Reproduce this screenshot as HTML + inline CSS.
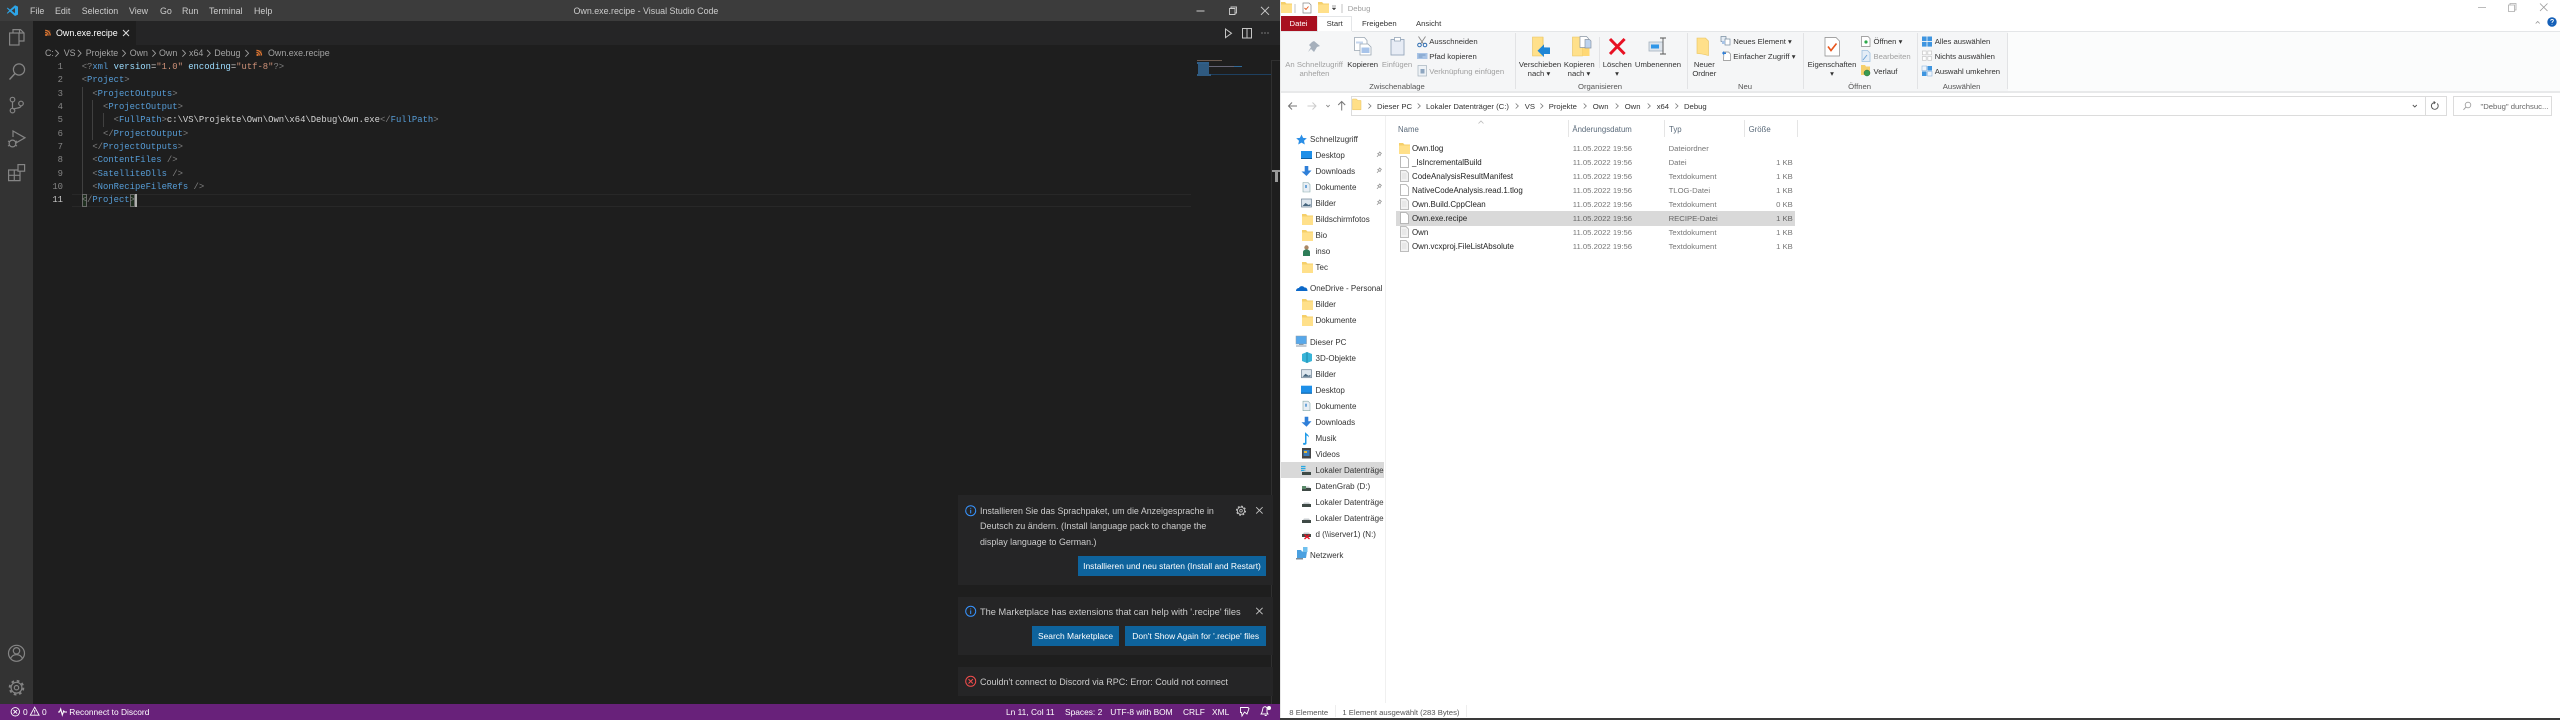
<!DOCTYPE html>
<html lang="de"><head><meta charset="utf-8"><title>Own.exe.recipe - Visual Studio Code</title>
<style>
html,body{margin:0;padding:0;width:2560px;height:720px;overflow:hidden;background:#fff}
#r{position:absolute;left:0;top:0;width:2560px;height:720px;overflow:hidden;font-family:"Liberation Sans",sans-serif;filter:blur(.3px)}
.b{position:absolute}
.t{position:absolute;white-space:nowrap;line-height:14px;margin-top:-7px}
.c{transform:translateX(-50%)}
.m{font-size:8.9px;color:#ccc}
.w{font-size:8.9px;color:#fff}
.wb{font-size:8.45px;color:#fff}
.bc{font-size:8.9px;color:#a3a3a3}
.sb{font-size:8.4px;color:#fff}
.n{font-size:8.9px;color:#ccc}
.e,.g,.l,.a,.h,.f,.d,.nv{margin-top:-6px}
.e{font-size:7.7px;color:#333}
.g{font-size:7.7px;color:#a0a0a0}
.l{font-size:7.7px;color:#555}
.a{font-size:7.7px;color:#333}
.h{font-size:7.8px;color:#5a6a7a}
.f{font-size:7.95px;color:#222}
.d{font-size:7.7px;color:#777}
.nv{font-size:8px;color:#333}
pre{position:absolute;margin:0;left:81.7px;font:8.89px/13.33px "Liberation Mono",monospace;color:#d4d4d4;white-space:pre;transform:translateY(1px)}
.ln{position:absolute;width:30px;left:33px;text-align:right;font:8.89px/13.33px "Liberation Mono",monospace;color:#858585;transform:translateY(1px)}
i{font-style:normal}
.p{color:#808080}.k{color:#569cd6}.q{color:#9cdcfe}.s{color:#ce9178}
.btn{position:absolute;background:#0e639c}
.card{position:absolute;background:#252526;left:958px;width:315px}
</style></head><body><div id="r">

<!-- VS Code backgrounds -->
<div class="b" style="left:0;top:0;width:1280px;height:720px;background:#1e1e1e"></div>
<div class="b" style="left:0;top:0;width:1280px;height:20.7px;background:#3c3c3c"></div>
<div class="b" style="left:0;top:20.7px;width:33px;height:684px;background:#333"></div>
<div class="b" style="left:33px;top:20.7px;width:1247px;height:24.3px;background:#252526"></div>
<div class="b" style="left:33px;top:20.7px;width:102.5px;height:24.3px;background:#1e1e1e"></div>
<div class="b" style="left:72px;top:194px;width:1119px;height:12.5px;border-top:1px solid #282828;border-bottom:1px solid #282828;box-sizing:border-box"></div>
<div class="b" style="left:81.5px;top:87px;width:1px;height:107px;background:#404040"></div>
<div class="b" style="left:92.3px;top:100px;width:1px;height:40px;background:#404040"></div>
<div class="b" style="left:103px;top:113px;width:1px;height:14px;background:#404040"></div>
<div class="b" style="left:81.5px;top:194px;width:5.5px;height:13px;border:1px solid #6b6b6b;box-sizing:border-box;background:#1f2f1f"></div>
<div class="b" style="left:129.5px;top:194px;width:5.5px;height:13px;border:1px solid #6b6b6b;box-sizing:border-box;background:#1f2f1f"></div>
<div class="b" style="left:135px;top:194px;width:1.5px;height:13px;background:#aeafad"></div>
<div class="b" style="left:1271px;top:60px;width:1px;height:644px;background:#303030"></div>
<div class="b" style="left:1271px;top:60px;width:9px;height:1px;background:#303030"></div>
<div class="b" style="left:1275px;top:170px;width:3px;height:12px;background:#999"></div>
<div class="b" style="left:1272px;top:170px;width:8px;height:1.5px;background:#999"></div>
<!-- minimap -->
<div class="b" style="left:1197px;top:60px;width:25px;height:1px;background:#6a5a50"></div>
<div class="b" style="left:1197px;top:62px;width:12px;height:2px;background:#2f5f8a"></div>
<div class="b" style="left:1198px;top:64px;width:11px;height:10px;background:#2f5a80"></div>
<div class="b" style="left:1209px;top:66px;width:25px;height:1px;background:#667"></div>
<div class="b" style="left:1234px;top:66px;width:8px;height:1px;background:#2f6a9a"></div>
<div class="b" style="left:1197px;top:74px;width:14px;height:1.5px;background:#2f5a80"></div>
<div class="b" style="left:1211px;top:74.3px;width:60px;height:1px;background:#1e4060"></div>

<!-- Status bar -->
<div class="b" style="left:0;top:704px;width:1280px;height:16px;background:#68217a"></div>

<!-- Notifications -->
<div class="card" style="top:495px;height:90px"></div>
<div class="card" style="top:597px;height:58px"></div>
<div class="card" style="top:667px;height:29px"></div>
<div class="btn" style="left:1078px;top:556px;width:188px;height:20px"></div>
<div class="btn" style="left:1032px;top:626px;width:87px;height:19.5px"></div>
<div class="btn" style="left:1125.3px;top:626px;width:140.7px;height:19.5px"></div>

<!-- Explorer backgrounds -->
<div class="b" style="left:1280px;top:0;width:1280px;height:718px;background:#fff"></div>
<div class="b" style="left:1280px;top:718px;width:1280px;height:2px;background:#3a3a3a"></div>
<div class="b" style="left:1280px;top:15.7px;width:37px;height:15px;background:#a80f1f"></div>
<div class="b" style="left:1280px;top:31px;width:1280px;height:60px;background:#f5f6f7"></div>
<div class="b" style="left:2008px;top:31px;width:552px;height:60px;background:#fbfcfc"></div>
<div class="b" style="left:1280px;top:30.7px;width:1280px;height:1px;background:#e4e6e8"></div>
<div class="b" style="left:1280px;top:91px;width:1280px;height:2px;background:#e8e9ea"></div>
<div class="b" style="left:1317px;top:15.7px;width:35px;height:16px;background:#fff;border:1px solid #e4e6e8;border-bottom:0;box-sizing:border-box"></div>
<div class="b" style="left:1317.5px;top:31px;width:34px;height:1.5px;background:#f5f6f7"></div>
<div class="b" style="left:1515px;top:33px;width:1px;height:56px;background:#e2e3e5"></div>
<div class="b" style="left:1687px;top:33px;width:1px;height:56px;background:#e2e3e5"></div>
<div class="b" style="left:1803px;top:33px;width:1px;height:56px;background:#e2e3e5"></div>
<div class="b" style="left:1917px;top:33px;width:1px;height:56px;background:#e2e3e5"></div>
<div class="b" style="left:2007px;top:33px;width:1px;height:56px;background:#e2e3e5"></div>
<div class="b" style="left:1599px;top:37px;width:1px;height:31px;background:#e2e3e5"></div>
<!-- address -->
<div class="b" style="left:1350.7px;top:96.3px;width:1096px;height:19.4px;border:1px solid #dcdcdc;box-sizing:border-box;background:#fff"></div>
<div class="b" style="left:2425px;top:96.3px;width:1px;height:19.4px;background:#dcdcdc"></div>
<div class="b" style="left:2453px;top:96.3px;width:99px;height:19.4px;border:1px solid #dcdcdc;box-sizing:border-box;background:#fff"></div>
<!-- separators -->
<div class="b" style="left:1385px;top:116px;width:1px;height:587px;background:#f0f0f0"></div>
<div class="b" style="left:1280px;top:462px;width:104px;height:16px;background:#d9d9d9"></div>
<div class="b" style="left:1567.5px;top:120px;width:1px;height:17px;background:#e5e5e5"></div>
<div class="b" style="left:1663.8px;top:120px;width:1px;height:17px;background:#e5e5e5"></div>
<div class="b" style="left:1744px;top:120px;width:1px;height:17px;background:#e5e5e5"></div>
<div class="b" style="left:1797px;top:120px;width:1px;height:17px;background:#e5e5e5"></div>
<div class="b" style="left:1396.2px;top:211.3px;width:399.3px;height:14.7px;background:#d9d9d9"></div>
<div class="b" style="left:1335px;top:705px;width:1px;height:12px;background:#eee"></div>
<div class="b" style="left:1465.5px;top:705px;width:1px;height:12px;background:#eee"></div>
<div class="b" style="left:1280px;top:0;width:1px;height:718px;background:#e8e8e8"></div>

<!-- ICONS -->
<svg class="b" style="left:0;top:0" width="2560" height="720" viewBox="0 0 2560 720">
<defs>
<g id="fo"><path d="M0 2h4l1.500 1.500H11V13H0z" fill="#f5cf6a"/><path d="M0 4.500h11V13H0z" fill="#ffe08a"/></g>
<g id="doc"><path d="M.5.5h5.500l2.500 2.500v8.500h-8z" fill="#fff" stroke="#a8a8a8" stroke-width=".8"/></g>
<g id="txt"><path d="M.5.5h5.500l2.500 2.500v8.500h-8z" fill="#f2f2f2" stroke="#ababab" stroke-width=".8"/><path d="M2 4h4.500M2 6h4.500M2 8h4.500" stroke="#ccc" stroke-width=".6"/></g>
<g id="pin"><path d="M-1.500 -3h3M-1 -3v2.500h2v-2.500M0 -.5v3M-2 -.5h4" fill="none" stroke="#999" stroke-width=".8" transform="rotate(40)"/></g>
<g id="drv"><rect x="-4.500" y="0" width="9" height="3" fill="#3f4a46"/><path d="M-3.500 0l1-1.500h5l1 1.500z" fill="#c9ced1"/></g>
<g id="img"><rect x="-5" y="-4" width="10" height="8" fill="#dde6ee" stroke="#6b7f92" stroke-width=".7"/><path d="M-4 3l3-3 3 2 2-1v2z" fill="#46667f"/></g>
<g id="dsk"><rect x="-5.500" y="-4" width="11" height="8" fill="#1e8fe8"/><rect x="-5.500" y="3" width="11" height="1" fill="#0c5fa3"/></g>
<g id="dlw"><path d="M-1.800 -5h3.600v4.500h3.200L0 5l-5-4.500h3.200z" fill="#2f7fd8"/></g>
<g id="dcm"><path d="M-3.500 -4.500h5l2 2v7.500h-7z" fill="#e8eef4" stroke="#8aa" stroke-width=".6"/><path d="M-1.500 -2h2v3h-2z" fill="#6ea6d8"/></g>
<g id="ch"><path d="M-1.300 -2.500L1.300 0L-1.300 2.500" fill="none" stroke="#777" stroke-width=".8"/></g>
<g id="vc"><path d="M-1.600 -3.400L1.600 0L-1.600 3.400" fill="none" stroke="#a0a0a0" stroke-width=".85"/></g>
<g id="rss"><rect x="-2.600" y="-3" width="5.400" height="6" fill="#e37933" opacity=".25"/><circle cx="-1.600" cy="2" r="1" fill="#e37933"/><path d="M-2.600 -.6a3 3 0 013 3M-2.600 -2.800a5.200 5.200 0 015.200 5.200" fill="none" stroke="#e37933" stroke-width="1"/></g>
<g id="inf"><circle r="5" fill="none" stroke="#3794ff" stroke-width="1"/><path d="M0 -2.800v.9M0 -.9v3.600" stroke="#3794ff" stroke-width="1"/></g>
<g id="x"><path d="M-3.200 -3.200L3.200 3.200M3.200 -3.200L-3.200 3.200" stroke="#c5c5c5" stroke-width=".9"/></g>
</defs>

<!-- vscode logo -->
<path d="M15 5.200L18 6.600V14.600L15 16 10 11.600 7.600 13.600 6.800 13.100 9.200 10.600 6.800 8.100 7.600 7.600 10 9.600z" fill="#2da5e8"/>
<path d="M15 8L11.600 10.600 15 13.200z" fill="#3c3c3c"/>
<!-- win controls -->
<path d="M1196.500 11h8" stroke="#ccc" stroke-width="1"/>
<path d="M1229.500 8.500h5.500v6h-5.500zM1231 8.500v-1.500h5.500v6h-1.500" fill="none" stroke="#ccc" stroke-width=".9"/>
<path d="M1261 6.800l8 8M1269 6.800l-8 8" stroke="#ccc" stroke-width="1"/>
<!-- activity -->
<g fill="none" stroke="#858585" stroke-width="1.200">
<path d="M13 33V29.600h7.500L24 33v8h-5M19.500 29.600v3.400H24"/><rect x="9.600" y="33" width="9.400" height="12"/>
<circle cx="19" cy="69.500" r="5.600"/><path d="M15 73.500L9.500 79.500" stroke-width="1.400"/>
<circle cx="12.500" cy="99.600" r="2.300"/><circle cx="12.500" cy="110.600" r="2.300"/><circle cx="21" cy="103.500" r="2.300"/><path d="M12.500 102v6.200M21 105.800c0 3-6.500 2-8 3.500"/>
<path d="M13 137V131L25 137.800 15 143.500"/><circle cx="12.500" cy="143.500" r="3.400"/><path d="M8 141l2 1M8 146l2-1M17 141l-2 1M17 146l-2-1"/>
<path d="M8.600 170H20V180.600H8.600zM8.600 175.300H20M14.300 170V180.600"/><rect x="18" y="164.600" width="6.600" height="6.600" fill="#333"/>
<circle cx="16.500" cy="653.300" r="8"/><circle cx="16.500" cy="650.800" r="3.200"/><path d="M10.500 659c1-3.200 3-4.300 6-4.300s5 1.100 6 4.300"/>
<circle cx="16.500" cy="687.700" r="5.400"/><circle cx="16.500" cy="687.700" r="2.200"/><circle cx="16.500" cy="687.700" r="6.900" stroke-width="1.800" stroke-dasharray="2.700 2.720"/>
</g>
<!-- tab -->
<use href="#rss" x="47.700" y="33"/>
<path d="M123 30l6 6M129 30l-6 6" stroke="#ddd" stroke-width="1"/>
<path d="M1225.500 29l6 4.300-6 4.300z" fill="none" stroke="#c5c5c5" stroke-width="1"/>
<path d="M1242.500 28.500h9v9.500h-9zM1247 28.500v9.500" fill="none" stroke="#c5c5c5" stroke-width="1"/>
<path d="M1261.500 33h1M1264.500 33h1M1267.500 33h1" stroke="#c5c5c5" stroke-width="1"/>
<!-- breadcrumb chevrons -->
<use href="#vc" x="57" y="53.300"/><use href="#vc" x="79.500" y="53.300"/><use href="#vc" x="124" y="53.300"/><use href="#vc" x="154" y="53.300"/><use href="#vc" x="184" y="53.300"/><use href="#vc" x="208.700" y="53.300"/><use href="#vc" x="247" y="53.300"/>
<use href="#rss" x="259" y="53"/>
<!-- notification icons -->
<use href="#inf" x="970.700" y="510.700"/><use href="#inf" x="970.700" y="611.300"/>
<g transform="translate(970.700 681.300)"><circle r="5" fill="none" stroke="#f14c4c" stroke-width="1"/><path d="M-2.200 -2.200L2.200 2.200M2.200 -2.200L-2.200 2.200" stroke="#f14c4c" stroke-width="1"/></g>
<use href="#x" x="1259.400" y="510.400"/><use href="#x" x="1259.400" y="611"/>
<g fill="none" stroke="#c5c5c5"><circle cx="1241" cy="510.700" r="3.600" stroke-width=".9"/><circle cx="1241" cy="510.700" r="1.300" stroke-width=".8"/><circle cx="1241" cy="510.700" r="4.500" stroke-width="1.100" stroke-dasharray="1.800 1.730"/></g>
<!-- status icons -->
<g fill="none" stroke="#fff" stroke-width=".9">
<circle cx="15.300" cy="711.800" r="4.200"/><path d="M13.500 710l3.600 3.600M17.100 710l-3.600 3.600"/>
<path d="M34.700 707.200l4.400 8h-8.800zM34.700 710v2.800M34.700 713.600v.7"/>
<path d="M58 712h1.500l1.200-3 1.600 6 1.400-4 .8 1h2.500" stroke-width="1.100"/>
<path d="M1240.500 707.500h7.500l1 1-2 5.500-2.500-2-2.500 4-.5-3.500h-1z"/>
<path d="M1263 708c0-.6 1-1.300 2.500-1.300l1.500 1v4.500l1 1.800h-7l1-1.800zM1264.700 715.500h2" />
</g>
<circle cx="1269" cy="708" r="2" fill="#fff"/>

<!-- QAT -->
<use href="#fo" x="1281" y="0"/>
<path d="M1295 4v9M1342 4v9" stroke="#aaa" stroke-width=".7"/>
<path d="M1303 3h6l2 2v8h-8z" fill="#fff" stroke="#888" stroke-width=".7"/><path d="M1304.500 8l1.500 1.500 2.500-3" fill="none" stroke="#e2541a" stroke-width=".9"/>
<use href="#fo" x="1318" y="0"/>
<path d="M1332 6h4M1332.200 8h3.600l-1.800 2z" fill="#444" stroke="#444" stroke-width=".5"/>
<!-- win ctl explorer -->
<path d="M2478 7.500h8" stroke="#bbb" stroke-width="1"/>
<path d="M2508.500 5h6v6.500h-6zM2510 5V3.500h6v6.500h-1.500" fill="none" stroke="#aaa" stroke-width=".8"/>
<path d="M2540 3.500l7.500 7.500M2547.500 3.500l-7.500 7.500" stroke="#999" stroke-width=".8"/>
<path d="M2535.700 23.500l2-2 2 2" fill="none" stroke="#999" stroke-width=".8"/>
<circle cx="2552" cy="22" r="4.700" fill="#1560b8"/>
<path d="M2550.600 20.600c.3-1.500 2.800-1.500 2.800 0 0 1-1.400 1-1.400 2.300M2552 24.200v.6" fill="none" stroke="#fff" stroke-width=".9"/>

<!-- ribbon icons -->
<path d="M1314 41l6 5-3 1-3 5-3-3-3 3 3-5-2-2 3-3z" fill="#a6b0bc"/>
<!-- copy -->
<path d="M1354.500 37.500h10l2.500 3v10h-12.500z" fill="#fff" stroke="#9aa6b2" stroke-width=".8"/>
<path d="M1360 44h8l3 3v8h-11z" fill="#fff" stroke="#9aa6b2" stroke-width=".8"/><path d="M1361.500 47.500h8v5.500h-8z" fill="#a8c4ea"/>
<path d="M1356 41.500h7v2h-7z" fill="#c4d6ee"/>
<!-- paste -->
<rect x="1391" y="39.500" width="13" height="15.500" fill="#e7ecf5" stroke="#97a8bc" stroke-width=".9"/><rect x="1394.500" y="37.500" width="6" height="3.500" fill="#fff" stroke="#8a9caf" stroke-width=".7"/>
<!-- scissors -->
<path d="M1418.500 36.500l5 7.500M1425.500 36.500l-5 7.500" stroke="#888" stroke-width=".9"/><circle cx="1419.500" cy="45" r="1.800" fill="none" stroke="#2b6bb0"/><circle cx="1425" cy="45" r="1.800" fill="none" stroke="#2b6bb0"/>
<!-- path -->
<rect x="1417" y="53" width="10.500" height="6" fill="#a9c4e6"/><path d="M1418.500 55h7M1418.500 57h4" stroke="#3e6aa0" stroke-width=".6"/>
<!-- link -->
<rect x="1418" y="65.500" width="8.500" height="10.500" fill="#eef2f6" stroke="#a6b2be" stroke-width=".7"/><rect x="1420.500" y="69" width="4" height="4.500" fill="#8ea6c0"/>
<!-- move folder -->
<path d="M1532.500 37h10.500v19h-10.500z" fill="#ffe08a" stroke="#e8c25d" stroke-width=".6"/><path d="M1543 37v18.700" stroke="#f0cb67"/>
<path d="M1550 47.500v6.500h-6v3l-6.500-6.300 6.500-6.300v3z" fill="#1f86d6"/>
<!-- copy folder -->
<path d="M1572.500 37h10v19h-10z" fill="#ffe08a" stroke="#e8c25d" stroke-width=".6"/><path d="M1582.500 45h7v11h-7z" fill="#ffd875"/>
<path d="M1580 36.500h6.500l2 2v9h-8.500z" fill="#fff" stroke="#8a96a4" stroke-width=".7"/><path d="M1585 39.500h4.500l1.500 1.500v7h-6z" fill="#bdd3ef" stroke="#8a96a4" stroke-width=".7"/>
<!-- delete -->
<path d="M1610 39l14.600 15M1624.600 39l-14.600 15" stroke="#e81123" stroke-width="3"/>
<!-- rename -->
<rect x="1649" y="42" width="14" height="9" fill="#dde4ec" stroke="#a6b2be" stroke-width=".8"/><rect x="1651" y="44.500" width="8" height="4" fill="#2f96e8"/>
<path d="M1663 38.500v15M1660 38h6M1660 54h6" stroke="#555" stroke-width=".9"/>
<!-- new folder -->
<path d="M1697 38h8.500l3 3v14.500l-6.500-1.500-5-.5z" fill="#ffe08a" stroke="#e8c25d" stroke-width=".6"/>
<!-- new item -->
<rect x="1721" y="36.500" width="5" height="5" fill="#e4ecf4" stroke="#72889c" stroke-width=".7"/><rect x="1725" y="39" width="5" height="6" fill="#fff" stroke="#72889c" stroke-width=".7"/><rect x="1722" y="41" width="3" height="3" fill="#a8c4e6"/>
<path d="M1724 52h4.500l2 2v6.500h-7z" fill="#fff" stroke="#8a8a8a" stroke-width=".7"/><path d="M1722 53l2-2v1.500h2v1.500h-2v1.500z" fill="#2f7fd8"/>
<!-- properties -->
<path d="M1825 37.500h11l3.500 3.500v15h-14.500z" fill="#fff" stroke="#888" stroke-width=".7"/>
<path d="M1828 46.500l3 4 5.500-7" fill="none" stroke="#e8551c" stroke-width="1.600"/>
<!-- open -->
<path d="M1861.500 36.500h6.500l2 2v8h-8.500z" fill="#fff" stroke="#888" stroke-width=".7"/><circle cx="1866" cy="42" r="1.600" fill="#2da84a"/>
<path d="M1862 50.500h5.500l2.500 2.500v8.500h-8z" fill="#e4edf6" stroke="#9ec0de" stroke-width=".8"/><path d="M1863 60l4-5" stroke="#6fa4d8"/>
<path d="M1861 65h4l1 1.500h4V75h-9z" fill="#f5cf6a"/><circle cx="1867" cy="73" r="3" fill="#3a9b50" stroke="#2a6a3a" stroke-width=".5"/>
<!-- select all -->
<g fill="#3e95e0"><rect x="1922" y="36.500" width="4.600" height="4.600"/><rect x="1927.400" y="36.500" width="4.600" height="4.600"/><rect x="1922" y="42" width="4.600" height="4.600"/><rect x="1927.400" y="42" width="4.600" height="4.600"/></g>
<g fill="#fff" stroke="#c6c6c6" stroke-width=".7"><rect x="1922.400" y="51" width="3.800" height="3.800"/><rect x="1927.800" y="51" width="3.800" height="3.800"/><rect x="1922.400" y="56.500" width="3.800" height="3.800"/><rect x="1927.800" y="56.500" width="3.800" height="3.800"/></g>
<g><rect x="1922" y="66" width="4.600" height="4.600" fill="#eef4fb" stroke="#8fb6dc" stroke-width=".6"/><rect x="1927.400" y="66" width="4.600" height="4.600" fill="#3e95e0"/><rect x="1922" y="71.400" width="4.600" height="4.600" fill="#3e95e0"/><rect x="1927.400" y="71.400" width="4.600" height="4.600" fill="#eef4fb" stroke="#8fb6dc" stroke-width=".6"/></g>

<!-- address icons -->
<path d="M1297 106h-8.500M1292 102.500l-3.500 3.500 3.500 3.500" fill="none" stroke="#777" stroke-width="1"/>
<path d="M1307.500 106h8.500M1312.500 102.500l3.500 3.500-3.500 3.500" fill="none" stroke="#ccc" stroke-width="1"/>
<path d="M1326.300 105l1.700 1.800 1.700-1.800" fill="none" stroke="#888" stroke-width=".9"/>
<path d="M1341.700 110.500v-9M1338.200 105l3.500-3.500 3.500 3.500" fill="none" stroke="#777" stroke-width="1"/>
<g transform="translate(1352.500 99)"><path d="M0 0h4l1.500 1.500h3V10.800H0z" fill="#ffdf88" stroke="#e8c25d" stroke-width=".5"/></g>
<use href="#ch" x="1369.700" y="106"/><use href="#ch" x="1419" y="106"/><use href="#ch" x="1517" y="106"/><use href="#ch" x="1541.700" y="106"/><use href="#ch" x="1585" y="106"/><use href="#ch" x="1617" y="106"/><use href="#ch" x="1649" y="106"/><use href="#ch" x="1676.700" y="106"/>
<path d="M2412.800 105l2 2 2-2" fill="none" stroke="#555" stroke-width=".9"/>
<path d="M2435 102.500a3.400 3.400 0 102.200 1M2433.700 101.300l1.500 1.300-1.400 1.300" fill="none" stroke="#555" stroke-width=".9"/>
<circle cx="2468" cy="105" r="2.800" fill="none" stroke="#999" stroke-width=".8"/><path d="M2466 107l-2.500 2.800" stroke="#999" stroke-width=".9"/>
<path d="M1478.500 123.500l2.500-2.500 2.500 2.500" fill="none" stroke="#bbb" stroke-width=".8"/>

<!-- file icons -->
<use href="#fo" x="1399" y="141"/>
<use href="#doc" x="1400" y="156"/><use href="#txt" x="1400" y="170"/><use href="#doc" x="1400" y="184"/><use href="#txt" x="1400" y="198"/><use href="#doc" x="1400" y="212"/><use href="#txt" x="1400" y="226"/><use href="#txt" x="1400" y="240"/>

<!-- nav icons -->
<path d="M1301.500 134.500l1.600 3.400 3.700.4-2.800 2.500.8 3.700-3.300-1.900-3.300 1.900.8-3.700-2.800-2.500 3.700-.4z" fill="#2a8ee6"/>
<use href="#dsk" x="1306.500" y="155"/><use href="#dlw" x="1306.500" y="171"/><use href="#dcm" x="1306.500" y="187"/><use href="#img" x="1306.500" y="203"/>
<use href="#pin" x="1378.600" y="155"/><use href="#pin" x="1378.600" y="171"/><use href="#pin" x="1378.600" y="187"/><use href="#pin" x="1378.600" y="203"/>
<use href="#fo" x="1302" y="212"/><use href="#fo" x="1302" y="228"/>
<circle cx="1306.500" cy="247.500" r="2.200" fill="#a86"/><path d="M1303 256v-4c0-1.500 1.500-2.500 3.500-2.500s3.500 1 3.500 2.500v4z" fill="#2e7d58"/>
<use href="#fo" x="1302" y="260"/>
<path d="M1296 291c0-2 1.500-3 3-3 .7-2 4-2.600 5.500-.5 2-.3 3 1.300 3 3.500z" fill="#0c68c8"/>
<use href="#fo" x="1302" y="297"/><use href="#fo" x="1302" y="313"/>
<rect x="1296" y="336" width="10.500" height="8" fill="#57a8ea" stroke="#8a9aa8" stroke-width=".5"/><path d="M1299 344.500h4.500M1296 346h10.500" stroke="#8a9aa8" stroke-width="1"/>
<path d="M1302 354l5-2 5 2v7l-5 2-5-2z" fill="#38b4d8"/><path d="M1307 352v11" stroke="#1a8aac"/>
<use href="#img" x="1306.500" y="373.700"/><use href="#dsk" x="1306.500" y="389.700"/><use href="#dcm" x="1306.500" y="405.700"/><use href="#dlw" x="1306.500" y="421.700"/>
<path d="M1305 443v-11c1.500 2 4 2.500 4 5.500-1-1.500-2-2-2.500-2v8c0 1.500-3.500 2-3.500 .5s1.300-1.500 2-1z" fill="#1f9ae8"/>
<rect x="1302" y="448" width="9" height="10.500" fill="#444"/><rect x="1303.500" y="450" width="6" height="6" fill="#3a7ab8"/><rect x="1304" y="451" width="3" height="2" fill="#e8b838"/>
<path d="M1301 466.500h4.500M1301 468.500h4.500M1301 470.500h4.500" stroke="#2ba8e0" stroke-width="1.200"/>
<use href="#drv" x="1306.500" y="472"/>
<use href="#drv" x="1306.500" y="488"/><path d="M1302 486h4v3h-4z" fill="#5a8a6a"/>
<use href="#drv" x="1306.500" y="504"/><use href="#drv" x="1306.500" y="520"/>
<use href="#drv" x="1306.500" y="534"/><path d="M1304.500 534.500l5 4.500M1309.500 534.500l-5 4.500" stroke="#e81123" stroke-width="1.400"/>
<path d="M1297 550h4l1 1.500h5l-1 6.500h-9z" fill="#4aa0e0"/><path d="M1303 547h4.500v5h-4.500z" fill="#70c0ee"/><rect x="1296" y="558" width="7" height="1.500" fill="#7a8a98"/>
</svg>

<!-- TEXT: VS Code -->
<span class="t m" style="left:30px;top:10.7px">File</span>
<span class="t m" style="left:55px;top:10.7px">Edit</span>
<span class="t m" style="left:81.7px;top:10.7px">Selection</span>
<span class="t m" style="left:129px;top:10.7px">View</span>
<span class="t m" style="left:160px;top:10.7px">Go</span>
<span class="t m" style="left:182px;top:10.7px">Run</span>
<span class="t m" style="left:209px;top:10.7px">Terminal</span>
<span class="t m" style="left:254px;top:10.7px">Help</span>
<span class="t m" style="left:573.5px;top:10.7px">Own.exe.recipe - Visual Studio Code</span>
<span class="t w" style="left:56px;top:33.3px">Own.exe.recipe</span>

<span class="t bc" style="left:45px;top:53.3px">C:</span>
<span class="t bc" style="left:63.7px;top:53.3px">VS</span>
<span class="t bc" style="left:85.7px;top:53.3px">Projekte</span>
<span class="t bc" style="left:129.7px;top:53.3px">Own</span>
<span class="t bc" style="left:159px;top:53.3px">Own</span>
<span class="t bc" style="left:189px;top:53.3px">x64</span>
<span class="t bc" style="left:214.3px;top:53.3px">Debug</span>
<span class="t bc" style="left:268px;top:53.3px">Own.exe.recipe</span>

<div class="ln" style="top:60px">1</div>
<div class="ln" style="top:73.33px">2</div>
<div class="ln" style="top:86.66px">3</div>
<div class="ln" style="top:100px">4</div>
<div class="ln" style="top:113.33px">5</div>
<div class="ln" style="top:126.66px">6</div>
<div class="ln" style="top:140px">7</div>
<div class="ln" style="top:153.33px">8</div>
<div class="ln" style="top:166.66px">9</div>
<div class="ln" style="top:180px">10</div>
<div class="ln" style="top:193.33px;color:#c6c6c6">11</div>

<pre style="top:60px"><i class="p">&lt;?</i><i class="k">xml</i> <i class="q">version</i>=<i class="s">"1.0"</i> <i class="q">encoding</i>=<i class="s">"utf-8"</i><i class="p">?&gt;</i></pre>
<pre style="top:73.33px"><i class="p">&lt;</i><i class="k">Project</i><i class="p">&gt;</i></pre>
<pre style="top:86.66px">  <i class="p">&lt;</i><i class="k">ProjectOutputs</i><i class="p">&gt;</i></pre>
<pre style="top:100px">    <i class="p">&lt;</i><i class="k">ProjectOutput</i><i class="p">&gt;</i></pre>
<pre style="top:113.33px">      <i class="p">&lt;</i><i class="k">FullPath</i><i class="p">&gt;</i>c:\VS\Projekte\Own\Own\x64\Debug\Own.exe<i class="p">&lt;/</i><i class="k">FullPath</i><i class="p">&gt;</i></pre>
<pre style="top:126.66px">    <i class="p">&lt;/</i><i class="k">ProjectOutput</i><i class="p">&gt;</i></pre>
<pre style="top:140px">  <i class="p">&lt;/</i><i class="k">ProjectOutputs</i><i class="p">&gt;</i></pre>
<pre style="top:153.33px">  <i class="p">&lt;</i><i class="k">ContentFiles</i> <i class="p">/&gt;</i></pre>
<pre style="top:166.66px">  <i class="p">&lt;</i><i class="k">SatelliteDlls</i> <i class="p">/&gt;</i></pre>
<pre style="top:180px">  <i class="p">&lt;</i><i class="k">NonRecipeFileRefs</i> <i class="p">/&gt;</i></pre>
<pre style="top:193.33px"><i class="p">&lt;/</i><i class="k">Project</i><i class="p">&gt;</i></pre>

<!-- Notifications text -->
<span class="t n" style="left:980px;top:510.7px">Installieren Sie das Sprachpaket, um die Anzeigesprache in</span>
<span class="t n" style="left:980px;top:526.2px;font-size:9.05px">Deutsch zu ändern. (Install language pack to change the</span>
<span class="t n" style="left:980px;top:541.7px">display language to German.)</span>
<span class="t wb c" style="left:1172px;top:566px">Installieren und neu starten (Install and Restart)</span>
<span class="t n" style="left:980px;top:611.5px;font-size:9.25px">The Marketplace has extensions that can help with '.recipe' files</span>
<span class="t wb c" style="left:1075.5px;top:636px">Search Marketplace</span>
<span class="t wb c" style="left:1195.7px;top:636px">Don't Show Again for '.recipe' files</span>
<span class="t n" style="left:980px;top:681.5px;font-size:9px">Couldn't connect to Discord via RPC: Error: Could not connect</span>

<!-- Status -->
<span class="t sb" style="left:23px;top:712px">0</span>
<span class="t sb" style="left:42px;top:712px">0</span>
<span class="t sb" style="left:69.3px;top:712px">Reconnect to Discord</span>
<span class="t sb" style="left:1006px;top:712px">Ln 11, Col 11</span>
<span class="t sb" style="left:1065px;top:712px">Spaces: 2</span>
<span class="t sb" style="left:1110.3px;top:712px">UTF-8 with BOM</span>
<span class="t sb" style="left:1183px;top:712px">CRLF</span>
<span class="t sb" style="left:1212px;top:712px">XML</span>

<!-- Explorer title / tabs -->
<span class="t g" style="left:1347.7px;top:8px">Debug</span>
<span class="t e c" style="left:1298.5px;top:23.3px;color:#fff">Datei</span>
<span class="t e c" style="left:1334.7px;top:23.3px">Start</span>
<span class="t e" style="left:1362px;top:23.3px">Freigeben</span>
<span class="t e" style="left:1416px;top:23.3px">Ansicht</span>

<!-- Ribbon text -->
<span class="t g" style="left:1285.3px;top:64px">An Schnellzugriff</span>
<span class="t g c" style="left:1314.5px;top:72.7px">anheften</span>
<span class="t e c" style="left:1362.7px;top:64px">Kopieren</span>
<span class="t g c" style="left:1397px;top:64px">Einfügen</span>
<span class="t e" style="left:1429.3px;top:41.3px">Ausschneiden</span>
<span class="t e" style="left:1429.3px;top:56px">Pfad kopieren</span>
<span class="t g" style="left:1429.3px;top:70.7px">Verknüpfung einfügen</span>
<span class="t l c" style="left:1397px;top:86px">Zwischenablage</span>
<span class="t e c" style="left:1540px;top:64px">Verschieben</span>
<span class="t e c" style="left:1539px;top:72.7px">nach ▾</span>
<span class="t e c" style="left:1579.3px;top:64px">Kopieren</span>
<span class="t e c" style="left:1579px;top:72.7px">nach ▾</span>
<span class="t e c" style="left:1617.3px;top:64px">Löschen</span>
<span class="t e c" style="left:1617px;top:72.7px">▾</span>
<span class="t e c" style="left:1658px;top:64px">Umbenennen</span>
<span class="t l c" style="left:1600px;top:86px">Organisieren</span>
<span class="t e c" style="left:1704.3px;top:64px">Neuer</span>
<span class="t e c" style="left:1704.3px;top:72.7px">Ordner</span>
<span class="t e" style="left:1733.3px;top:41.3px">Neues Element ▾</span>
<span class="t e" style="left:1733.3px;top:56px">Einfacher Zugriff ▾</span>
<span class="t l c" style="left:1745px;top:86px">Neu</span>
<span class="t e c" style="left:1832px;top:64px">Eigenschaften</span>
<span class="t e c" style="left:1832px;top:72.7px">▾</span>
<span class="t e" style="left:1873.5px;top:41.3px">Öffnen ▾</span>
<span class="t g" style="left:1873.5px;top:56px">Bearbeiten</span>
<span class="t e" style="left:1873.5px;top:70.7px">Verlauf</span>
<span class="t l c" style="left:1859.6px;top:86px">Öffnen</span>
<span class="t e" style="left:1934.7px;top:41.3px">Alles auswählen</span>
<span class="t e" style="left:1934.7px;top:56px">Nichts auswählen</span>
<span class="t e" style="left:1934.7px;top:70.7px">Auswahl umkehren</span>
<span class="t l c" style="left:1961.6px;top:86px">Auswählen</span>

<!-- Address -->
<span class="t a" style="left:1377px;top:106px">Dieser PC</span>
<span class="t a" style="left:1426px;top:106px">Lokaler Datenträger (C:)</span>
<span class="t a" style="left:1524.7px;top:106px">VS</span>
<span class="t a" style="left:1548.7px;top:106px">Projekte</span>
<span class="t a" style="left:1592.7px;top:106px">Own</span>
<span class="t a" style="left:1624.7px;top:106px">Own</span>
<span class="t a" style="left:1656.7px;top:106px">x64</span>
<span class="t a" style="left:1684px;top:106px">Debug</span>
<span class="t d" style="left:2480.5px;top:106px;color:#666">"Debug" durchsuc...</span>

<!-- Column headers -->
<span class="t h" style="left:1398px;top:129.3px">Name</span>
<span class="t h" style="left:1572.4px;top:129.3px">Änderungsdatum</span>
<span class="t h" style="left:1669px;top:129.3px">Typ</span>
<span class="t h" style="left:1748.6px;top:129.3px">Größe</span>

<!-- Files -->
<span class="t f" style="left:1412px;top:148.3px">Own.tlog</span>
<span class="t d" style="left:1572.8px;top:148.3px">11.05.2022 19:56</span>
<span class="t d" style="left:1668.6px;top:148.3px">Dateiordner</span>

<span class="t f" style="left:1412px;top:162.3px">_IsIncrementalBuild</span>
<span class="t d" style="left:1572.8px;top:162.3px">11.05.2022 19:56</span>
<span class="t d" style="left:1668.6px;top:162.3px">Datei</span>
<span class="t d" style="right:767.2px;top:162.3px">1 KB</span>

<span class="t f" style="left:1412px;top:176.3px">CodeAnalysisResultManifest</span>
<span class="t d" style="left:1572.8px;top:176.3px">11.05.2022 19:56</span>
<span class="t d" style="left:1668.6px;top:176.3px">Textdokument</span>
<span class="t d" style="right:767.2px;top:176.3px">1 KB</span>

<span class="t f" style="left:1412px;top:190.3px">NativeCodeAnalysis.read.1.tlog</span>
<span class="t d" style="left:1572.8px;top:190.3px">11.05.2022 19:56</span>
<span class="t d" style="left:1668.6px;top:190.3px">TLOG-Datei</span>
<span class="t d" style="right:767.2px;top:190.3px">1 KB</span>

<span class="t f" style="left:1412px;top:204.3px">Own.Build.CppClean</span>
<span class="t d" style="left:1572.8px;top:204.3px">11.05.2022 19:56</span>
<span class="t d" style="left:1668.6px;top:204.3px">Textdokument</span>
<span class="t d" style="right:767.2px;top:204.3px">0 KB</span>

<span class="t f" style="left:1412px;top:218.3px">Own.exe.recipe</span>
<span class="t d" style="left:1572.8px;top:218.3px;color:#666">11.05.2022 19:56</span>
<span class="t d" style="left:1668.6px;top:218.3px;color:#666">RECIPE-Datei</span>
<span class="t d" style="right:767.2px;top:218.3px;color:#666">1 KB</span>

<span class="t f" style="left:1412px;top:232.3px">Own</span>
<span class="t d" style="left:1572.8px;top:232.3px">11.05.2022 19:56</span>
<span class="t d" style="left:1668.6px;top:232.3px">Textdokument</span>
<span class="t d" style="right:767.2px;top:232.3px">1 KB</span>

<span class="t f" style="left:1412px;top:246.3px">Own.vcxproj.FileListAbsolute</span>
<span class="t d" style="left:1572.8px;top:246.3px">11.05.2022 19:56</span>
<span class="t d" style="left:1668.6px;top:246.3px">Textdokument</span>
<span class="t d" style="right:767.2px;top:246.3px">1 KB</span>

<!-- Nav tree -->
<span class="t nv" style="left:1310px;top:139px">Schnellzugriff</span>
<span class="t nv" style="left:1315.5px;top:155px">Desktop</span>
<span class="t nv" style="left:1315.5px;top:171px">Downloads</span>
<span class="t nv" style="left:1315.5px;top:187px">Dokumente</span>
<span class="t nv" style="left:1315.5px;top:203px">Bilder</span>
<span class="t nv" style="left:1315.5px;top:219px">Bildschirmfotos</span>
<span class="t nv" style="left:1315.5px;top:235px">Bio</span>
<span class="t nv" style="left:1315.5px;top:251px">inso</span>
<span class="t nv" style="left:1315.5px;top:267px">Tec</span>
<span class="t nv" style="left:1310px;top:288.3px">OneDrive - Personal</span>
<span class="t nv" style="left:1315.5px;top:304.3px">Bilder</span>
<span class="t nv" style="left:1315.5px;top:320.3px">Dokumente</span>
<span class="t nv" style="left:1310px;top:341.7px">Dieser PC</span>
<span class="t nv" style="left:1315.5px;top:357.7px">3D-Objekte</span>
<span class="t nv" style="left:1315.5px;top:373.7px">Bilder</span>
<span class="t nv" style="left:1315.5px;top:389.7px">Desktop</span>
<span class="t nv" style="left:1315.5px;top:405.7px">Dokumente</span>
<span class="t nv" style="left:1315.5px;top:421.7px">Downloads</span>
<span class="t nv" style="left:1315.5px;top:437.7px">Musik</span>
<span class="t nv" style="left:1315.5px;top:453.7px">Videos</span>
<span class="t nv" style="left:1315.5px;top:469.7px;width:68.5px;overflow:hidden">Lokaler Datenträger</span>
<span class="t nv" style="left:1315.5px;top:485.7px">DatenGrab (D:)</span>
<span class="t nv" style="left:1315.5px;top:501.7px;width:68.5px;overflow:hidden">Lokaler Datenträger</span>
<span class="t nv" style="left:1315.5px;top:517.7px;width:68.5px;overflow:hidden">Lokaler Datenträger</span>
<span class="t nv" style="left:1315.5px;top:533.7px">d (\\iserver1) (N:)</span>
<span class="t nv" style="left:1310px;top:555px">Netzwerk</span>

<!-- Explorer status -->
<span class="t l" style="left:1289.3px;top:711.7px">8 Elemente</span>
<span class="t l" style="left:1342.4px;top:711.7px">1 Element ausgewählt (283 Bytes)</span>

</div></body></html>
